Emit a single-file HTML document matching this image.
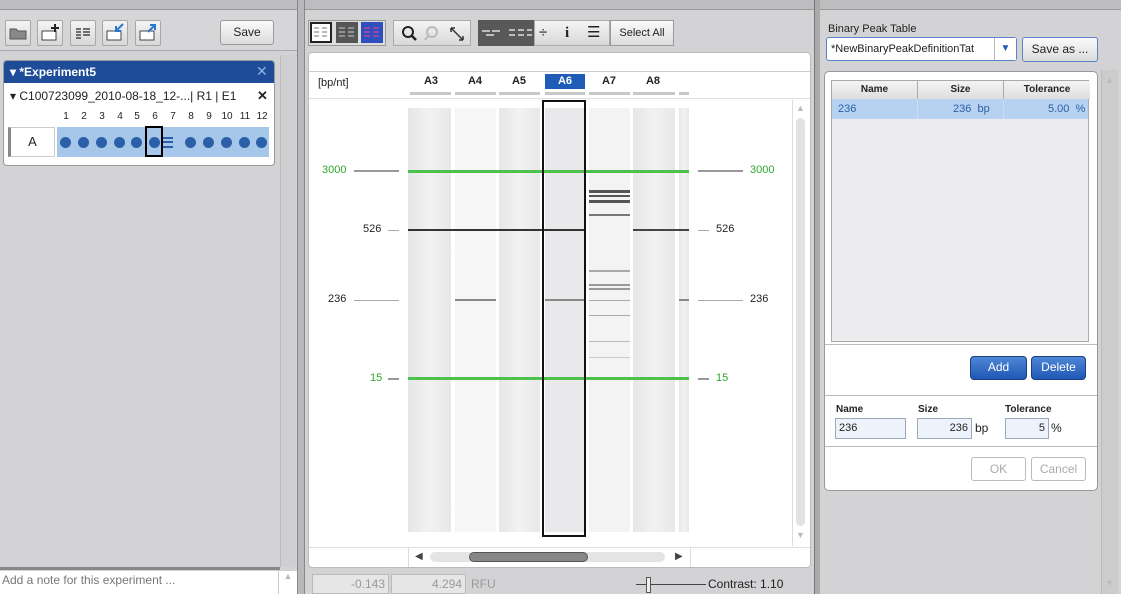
<!DOCTYPE html><html><head><style>
*{margin:0;padding:0;box-sizing:border-box}
body{width:1121px;height:594px;overflow:hidden;background:#d3d3d5;font-family:"Liberation Sans",sans-serif;font-size:11px;color:#222;position:relative}
div,span{position:absolute}
.btn{background:linear-gradient(#fafafa,#dcdcdc);border:1px solid #9a9a9a;border-radius:3px;text-align:center}
.ib{width:26px;height:26px;background:linear-gradient(#f4f4f4,#d8d8d8);border:1px solid #a8a8a8;border-radius:2px}
.lane{top:108px;height:424px;background:linear-gradient(90deg,#e6e6e8,#f2f2f3 50%,#e8e8ea)}
.b{height:2px;background:#555}
.g{height:3px;background:#4cc24c}
.lh{top:92px;height:3px;background:#c8c8c8}
.lt{top:75px;font-weight:bold;font-size:11px;width:40px;text-align:center}
.bb{background:linear-gradient(#4f86d6,#1d58b4);border:1px solid #1a3f80;border-radius:4px;color:#fff;text-align:center;line-height:21px;font-size:12px}
.in{background:#eef3fb;border:1px solid #9ab;height:21px;line-height:19px;padding:0 3px;font-size:11px}
.th{background:linear-gradient(#f4f4f4,#dedede);border-right:1px solid #aaa;text-align:center;font-weight:bold;font-size:10px;line-height:17px;top:0;height:18px}
.n{top:50px;font-size:10px;width:16px;text-align:center}
.d{top:76px;width:11px;height:11px;border-radius:50%;background:#2b5fa8}
</style></head><body>
<div style="left:0;top:0;width:1121px;height:10px;background:#bdbdc0;border-bottom:1px solid #999"></div>
<div style="left:0;top:10px;width:297px;height:41px;background:#d6d6d8;border-bottom:1px solid #aaa"></div>
<div class="ib" style="left:5px;top:20px"><svg width="24" height="24"><path d="M4 8h6l2 2h8v8H4z" fill="#888" stroke="#555"/></svg></div>
<div class="ib" style="left:37px;top:20px"><svg width="24" height="24"><path d="M4 10h14v9H4z" fill="#fff" stroke="#444"/><path d="M17 3v8M13 7h8" stroke="#222" stroke-width="2"/></svg></div>
<div class="ib" style="left:70px;top:20px"><svg width="24" height="24"><path d="M5 8h5M5 11h5M5 14h5M5 17h5M12 8h7M12 11h7M12 14h7" stroke="#444" stroke-width="1.5"/></svg></div>
<div class="ib" style="left:102px;top:20px"><svg width="24" height="24"><path d="M4 10h14v9H4z" fill="#fff" stroke="#444"/><path d="M20 3l-7 7M13 5v5h5" stroke="#2878d0" stroke-width="2" fill="none"/></svg></div>
<div class="ib" style="left:135px;top:20px"><svg width="24" height="24"><path d="M4 10h14v9H4z" fill="#fff" stroke="#444"/><path d="M12 11l7-7M14 4h5v5" stroke="#2878d0" stroke-width="2" fill="none"/></svg></div>
<div class="btn" style="left:220px;top:20px;width:54px;height:25px;line-height:23px;font-size:12px">Save</div>
<div style="left:3px;top:60px;width:272px;height:106px;background:#fff;border:1px solid #999;border-radius:4px;overflow:hidden">
 <div style="left:0;top:0;width:272px;height:22px;background:#1f4c98;color:#fff;font-weight:bold;font-size:12px;line-height:22px;padding-left:6px">▾ *Experiment5</div>
 <span style="left:252px;top:2px;color:#8fb2e6;font-size:14px">✕</span>
 <div style="left:6px;top:25px;font-size:12px;line-height:20px;width:260px">▾ C100723099_2010-08-18_12-...| R1 | E1</div>
 <span style="left:253px;top:27px;font-size:13px;font-weight:bold">✕</span>
 <span class="n" style="left:54px">1</span><span class="n" style="left:72px">2</span><span class="n" style="left:90px">3</span><span class="n" style="left:108px">4</span><span class="n" style="left:125px">5</span><span class="n" style="left:143px">6</span><span class="n" style="left:161px">7</span><span class="n" style="left:179px">8</span><span class="n" style="left:197px">9</span><span class="n" style="left:215px">10</span><span class="n" style="left:233px">11</span><span class="n" style="left:250px">12</span>
 <div style="left:4px;top:66px;width:47px;height:30px;border:1px solid #ccc;font-size:13px;line-height:28px;text-align:center;border-left:3px solid #888">A</div>
 <div style="left:53px;top:66px;width:212px;height:30px;background:#a6c6ea"></div>
 <div class="d" style="left:56px"></div><div class="d" style="left:74px"></div><div class="d" style="left:92px"></div><div class="d" style="left:110px"></div><div class="d" style="left:127px"></div><div class="d" style="left:145px"></div>
 <div style="left:157px;top:76px;width:12px;height:11px;border-top:2px solid #2b5fa8;border-bottom:2px solid #2b5fa8"><div style="left:0;top:2px;width:12px;height:2px;background:#2b5fa8"></div></div>
 <div class="d" style="left:181px"></div><div class="d" style="left:199px"></div><div class="d" style="left:217px"></div><div class="d" style="left:235px"></div><div class="d" style="left:252px"></div>
 <div style="left:141px;top:65px;width:18px;height:31px;border:2px solid #000"></div>
</div>
<div style="left:280px;top:55px;width:16px;height:512px;background:#cfcfd1;border-left:1px solid #bbb"></div>
<div style="left:0;top:567px;width:280px;height:3px;background:#888"></div>
<div style="left:0;top:571px;width:278px;height:23px;background:#fff;color:#777;font-size:12px;line-height:18px;padding-left:2px">Add a note for this experiment ...</div>
<div style="left:278px;top:571px;width:19px;height:23px;background:#fff;border-left:1px solid #ccc;color:#bbb;font-size:9px;text-align:center">▲</div>
<div style="left:297px;top:0;width:8px;height:594px;background:#b8b8ba;border-left:1px solid #888;border-right:1px solid #888"></div>
<!-- center toolbar -->
<div style="left:308px;top:20px;width:78px;height:26px;border:1px solid #999;background:#ddd"></div>
<div style="left:310px;top:22px;width:22px;height:21px;background:#fff;border:2px solid #222"><svg width="18" height="17"><path d="M2 4h5M10 4h5M2 8h5M10 8h5M2 12h5M10 12h5" stroke="#777"/></svg></div>
<div style="left:336px;top:22px;width:22px;height:21px;background:#555"><svg width="22" height="21"><path d="M3 6h6M12 6h6M3 10h6M12 10h6M3 14h6M12 14h6" stroke="#ccc"/></svg></div>
<div style="left:361px;top:22px;width:22px;height:21px;background:#2f4fbf"><svg width="22" height="21"><path d="M3 6h6M12 6h6M3 10h6M12 10h6M3 14h6M12 14h6" stroke="#f48"/></svg></div>
<div style="left:393px;top:20px;width:78px;height:26px;border:1px solid #aaa;background:linear-gradient(#f4f4f4,#d8d8d8)">
 <svg width="78" height="26"><circle cx="14" cy="11" r="5" fill="none" stroke="#222" stroke-width="2"/><path d="M18 15l4 4" stroke="#222" stroke-width="2.5"/><circle cx="38" cy="11" r="5" fill="none" stroke="#bbb" stroke-width="2"/><path d="M34 15l-3 4" stroke="#bbb" stroke-width="2"/><path d="M57 7l12 12M57 7v4M57 7h4M69 19v-4M69 19h-4" stroke="#333" stroke-width="1.5" fill="none"/></svg></div>
<div style="left:478px;top:20px;width:56px;height:26px;background:#585858"><svg width="56" height="26"><path d="M4 11h8M14 11h8M8 15h8M31 10h6M40 10h6M49 10h5M31 15h6M40 15h6M49 15h5" stroke="#ddd" stroke-width="1.5"/></svg></div>
<div style="left:534px;top:20px;width:76px;height:26px;background:linear-gradient(#f4f4f4,#d8d8d8);border:1px solid #aaa;font-size:15px;line-height:24px"><span style="left:4px">÷</span><span style="left:30px;font-family:'Liberation Serif';font-weight:bold">i</span><span style="left:52px">☰</span></div>
<div class="btn" style="left:610px;top:20px;width:64px;height:26px;line-height:24px;font-size:11px;border-radius:0">Select All</div>
<!-- center content -->
<div style="left:308px;top:52px;width:503px;height:516px;background:#fff;border:1px solid #bbb;border-radius:4px"></div>
<div style="left:309px;top:71px;width:501px;height:1px;background:#ccc"></div>
<div style="left:309px;top:98px;width:501px;height:1px;background:#ddd"></div>
<span style="left:318px;top:77px;font-size:11px">[bp/nt]</span>
<span class="lt" style="left:411px">A3</span><span class="lt" style="left:455px">A4</span><span class="lt" style="left:499px">A5</span>
<span class="lt" style="left:545px;top:74px;background:#1f5cb8;color:#fff;line-height:15px">A6</span>
<span class="lt" style="left:589px">A7</span><span class="lt" style="left:633px">A8</span>
<div class="lh" style="left:410px;width:41px"></div><div class="lh" style="left:455px;width:41px"></div><div class="lh" style="left:499px;width:41px"></div><div class="lh" style="left:545px;width:40px"></div><div class="lh" style="left:589px;width:41px"></div><div class="lh" style="left:633px;width:42px"></div><div class="lh" style="left:679px;width:10px"></div>
<div class="lane" style="left:408px;width:43px"></div>
<div class="lane" style="left:455px;width:41px;background:#f6f6f7"></div>
<div class="lane" style="left:499px;width:41px"></div>
<div class="lane" style="left:545px;width:40px;background:#e9e9eb"></div>
<div class="lane" style="left:589px;width:41px;background:#f3f3f4"></div>
<div class="lane" style="left:633px;width:42px"></div>
<div class="lane" style="left:679px;width:10px"></div>
<div class="g" style="left:408px;top:170px;width:281px"></div>
<div class="g" style="left:408px;top:377px;width:281px"></div>
<div class="b" style="left:408px;top:229px;width:176px;background:#333"></div>
<div class="b" style="left:633px;top:229px;width:56px;background:#444"></div>
<div class="b" style="left:455px;top:299px;width:41px;background:#888"></div>
<div class="b" style="left:545px;top:299px;width:40px;background:#888"></div>
<div class="b" style="left:679px;top:299px;width:10px;background:#888"></div>
<div class="b" style="left:589px;top:190px;width:41px;height:3px"></div>
<div class="b" style="left:589px;top:195px;width:41px;height:2px"></div>
<div class="b" style="left:589px;top:200px;width:41px;height:3px"></div>
<div class="b" style="left:589px;top:214px;width:41px;background:#777"></div>
<div class="b" style="left:589px;top:270px;width:41px;background:#aaa"></div>
<div class="b" style="left:589px;top:284px;width:41px;background:#999"></div>
<div class="b" style="left:589px;top:288px;width:41px;background:#999"></div>
<div class="b" style="left:589px;top:300px;width:41px;height:1px;background:#aaa"></div>
<div class="b" style="left:589px;top:315px;width:41px;height:1px;background:#aaa"></div>
<div class="b" style="left:589px;top:341px;width:41px;height:1px;background:#bbb"></div>
<div class="b" style="left:589px;top:357px;width:41px;height:1px;background:#ccc"></div>
<div style="left:542px;top:100px;width:44px;height:437px;border:2px solid #111"></div>
<span style="left:322px;top:164px;color:#2da82d">3000</span><div style="left:354px;top:170px;width:45px;height:2px;background:#999"></div>
<span style="left:363px;top:223px">526</span><div style="left:388px;top:230px;width:11px;height:1px;background:#aaa"></div>
<span style="left:328px;top:293px">236</span><div style="left:354px;top:300px;width:45px;height:1px;background:#aaa"></div>
<span style="left:370px;top:372px;color:#2da82d">15</span><div style="left:388px;top:378px;width:11px;height:2px;background:#999"></div>
<div style="left:698px;top:170px;width:45px;height:2px;background:#999"></div><span style="left:750px;top:164px;color:#2da82d">3000</span>
<div style="left:698px;top:230px;width:11px;height:1px;background:#aaa"></div><span style="left:716px;top:223px">526</span>
<div style="left:698px;top:300px;width:45px;height:1px;background:#aaa"></div><span style="left:750px;top:293px">236</span>
<div style="left:698px;top:378px;width:11px;height:2px;background:#999"></div><span style="left:716px;top:372px;color:#2da82d">15</span>
<div style="left:792px;top:100px;width:17px;height:446px;border-left:1px solid #ddd"></div>
<span style="left:796px;top:103px;color:#bbb;font-size:9px">▲</span>
<div style="left:796px;top:118px;width:9px;height:408px;background:#e2e2e2;border-radius:5px"></div>
<span style="left:796px;top:530px;color:#bbb;font-size:9px">▼</span>
<div style="left:309px;top:547px;width:501px;height:1px;background:#ddd"></div>
<div style="left:408px;top:547px;width:1px;height:20px;background:#ddd"></div>
<div style="left:690px;top:547px;width:1px;height:20px;background:#ddd"></div>
<span style="left:415px;top:551px;font-size:10px;color:#444">◀</span>
<div style="left:430px;top:552px;width:235px;height:10px;background:#e4e4e4;border-radius:5px"></div>
<div style="left:469px;top:552px;width:119px;height:10px;background:#888;border:1px solid #555;border-radius:5px"></div>
<span style="left:675px;top:551px;font-size:10px;color:#444">▶</span>
<div style="left:312px;top:574px;width:77px;height:20px;background:#e6e6e6;border:1px solid #bbb;color:#999;text-align:right;padding-right:3px;line-height:18px;font-size:12px">-0.143</div>
<div style="left:391px;top:574px;width:75px;height:20px;background:#e6e6e6;border:1px solid #bbb;color:#999;text-align:right;padding-right:3px;line-height:18px;font-size:12px">4.294</div>
<span style="left:471px;top:577px;color:#999;font-size:12px">RFU</span>
<div style="left:636px;top:584px;width:70px;height:1px;background:#444"></div>
<div style="left:646px;top:577px;width:5px;height:16px;background:#eee;border:1px solid #555"></div>
<span style="left:708px;top:577px;font-size:12px">Contrast: 1.10</span>
<div style="left:814px;top:0;width:6px;height:594px;background:#aaa;border-left:1px solid #777"></div>
<span style="left:828px;top:23px;font-size:11px">Binary Peak Table</span>
<div style="left:826px;top:37px;width:191px;height:24px;background:#fff;border:1px solid #5b84c8;border-radius:3px;font-size:11px;line-height:22px;padding-left:4px;overflow:hidden;white-space:nowrap">*NewBinaryPeakDefinitionTat</div>
<div style="left:994px;top:38px;width:22px;height:22px;border-left:1px solid #bbb;color:#1f5cb8;text-align:center;line-height:22px;font-size:10px;background:#fff">▼</div>
<div class="btn" style="left:1022px;top:37px;width:76px;height:25px;line-height:23px;font-size:12px;border-color:#5b84c8">Save as ...</div>
<div style="left:824px;top:71px;width:274px;height:420px;background:#fff;border:1px solid #999;border-radius:5px"></div>
<div style="left:831px;top:80px;width:258px;height:262px;background:#ececee;border:1px solid #aaa">
 <div class="th" style="left:0;width:86px">Name</div><div class="th" style="left:86px;width:86px">Size</div><div class="th" style="left:172px;width:86px;border:0">Tolerance</div>
 <div style="left:0;top:18px;width:256px;height:20px;background:#b6d2f0;color:#2b5fa8;font-size:11px;line-height:20px">
  <span style="left:6px">236</span><span style="left:121px">236&nbsp; bp</span><span style="left:216px">5.00&nbsp; %</span>
  <div style="left:85px;top:0;width:1px;height:20px;background:#cde"></div><div style="left:171px;top:0;width:1px;height:20px;background:#cde"></div></div>
</div>
<div style="left:825px;top:344px;width:272px;height:1px;background:#bbb"></div>
<div class="bb" style="left:970px;top:356px;width:57px;height:24px">Add</div>
<div class="bb" style="left:1031px;top:356px;width:55px;height:24px">Delete</div>
<div style="left:825px;top:395px;width:272px;height:1px;background:#bbb"></div>
<span style="left:836px;top:404px;font-weight:bold;font-size:10px">Name</span>
<span style="left:918px;top:404px;font-weight:bold;font-size:10px">Size</span>
<span style="left:1005px;top:404px;font-weight:bold;font-size:10px">Tolerance</span>
<div class="in" style="left:835px;top:418px;width:71px">236</div>
<div class="in" style="left:917px;top:418px;width:55px;text-align:right">236</div><span style="left:975px;top:421px;font-size:12px">bp</span>
<div class="in" style="left:1005px;top:418px;width:44px;text-align:right">5</div><span style="left:1051px;top:421px;font-size:12px">%</span>
<div style="left:825px;top:446px;width:272px;height:1px;background:#bbb"></div>
<div class="btn" style="left:971px;top:457px;width:55px;height:24px;line-height:22px;color:#aaa;background:#fff;border-color:#bbb;font-size:12px">OK</div>
<div class="btn" style="left:1031px;top:457px;width:55px;height:24px;line-height:22px;color:#aaa;background:#fff;border-color:#bbb;font-size:12px">Cancel</div>
<div style="left:1101px;top:70px;width:17px;height:524px;background:#ccc;border-left:1px solid #bbb"></div>
<span style="left:1105px;top:75px;color:#bbb;font-size:9px">▲</span>
<span style="left:1105px;top:578px;color:#bbb;font-size:9px">▼</span>
</body></html>
